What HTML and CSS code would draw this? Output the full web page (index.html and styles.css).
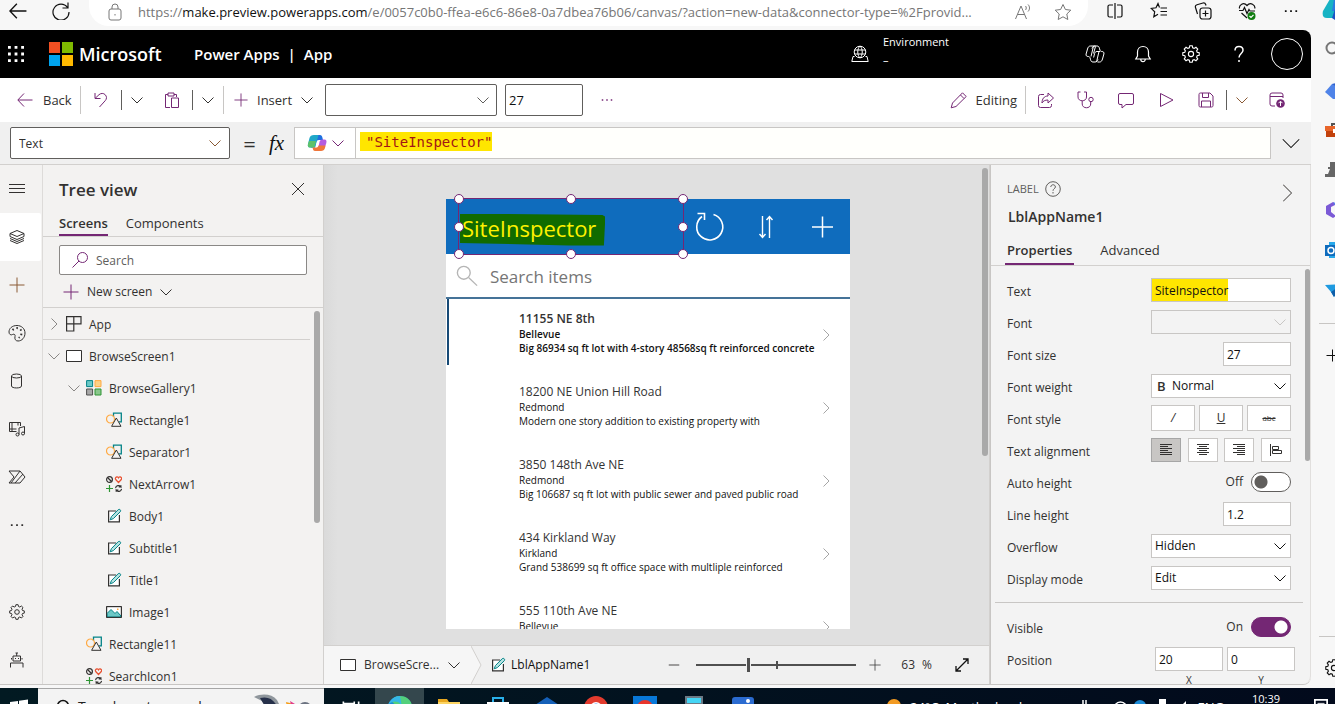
FILE: index.html
```html
<!DOCTYPE html>
<html lang="en">
<head>
<meta charset="utf-8">
<title>Power Apps | App</title>
<link rel="stylesheet" href="styles.css">
</head>
<body>
<svg class="sprite" aria-hidden="true">
  <symbol id="chev-down" viewBox="0 0 12 12"><path d="M.5 3.500 6 9l5.500-5.500"/></symbol>
  <symbol id="chev-right" viewBox="0 0 12 12"><path d="M3.500.5 9 6l-5.500 5.500"/></symbol>
  <symbol id="plus" viewBox="0 0 16 16"><path d="M8 .5v15M.5 8h15"/></symbol>
  <symbol id="minus" viewBox="0 0 16 16"><path d="M2 8h12"/></symbol>
  <symbol id="close" viewBox="0 0 16 16"><path d="m2 2 12 12M14 2 2 14"/></symbol>
  <symbol id="arrow-left" viewBox="0 0 16 16"><path d="M15.500 8H1M7 1.500.8 8 7 14.500"/></symbol>
  <symbol id="dots" viewBox="0 0 16 16"><path class="solid" d="M1 7h2v2H1zM7 7h2v2H7zM13 7h2v2h-2z"/></symbol>
  <symbol id="gear" viewBox="0 0 16 16"><circle cx="8" cy="8" r="2.300"/><path d="m6.900.7-.4 1.800-1.300.5-1.600-1L2 3.600l1 1.600-.5 1.300-1.800.4v2.200l1.800.4.5 1.300-1 1.600L3.600 14l1.600-1 1.300.5.4 1.800h2.200l.4-1.800 1.300-.5 1.600 1 1.600-1.600-1-1.600.5-1.300 1.800-.4V6.900l-1.800-.4-.5-1.300 1-1.600L12.400 2l-1.600 1-1.300-.5L9.100.7z"/></symbol>
  <symbol id="magnifier" viewBox="0 0 16 16"><circle cx="10.500" cy="5.500" r="5"/><path d="m7 9-6.500 6.500"/></symbol>
  <symbol id="screen" viewBox="0 0 16 16"><path class="fill-white" d="M.5 2.500h15v11H.5z"/></symbol>
  <symbol id="app" viewBox="0 0 16 16"><path stroke-width="1.200" d="M.6.6h14.400v7.200H.6zM7.800.6V15H.6V.6"/></symbol>
  <symbol id="gallery" viewBox="0 0 16 16"><path fill="#6bc8c6" stroke="#038387" d="M.6.6h6v6h-6z"/><path fill="#fcd287" stroke="#ffaa44" d="M9 .6h6v6H9z"/><path fill="#a8a8a8" stroke="#505050" d="M.6 9h6v6h-6z"/><path fill="#8ac78c" stroke="#2e9434" d="M9 9h6v6H9z"/></symbol>
  <symbol id="shapes" viewBox="0 0 16 16"><path stroke="#038387" stroke-width="1.300" d="M7.500 5V1.200h7.800v8.600H13"/><circle cx="4.500" cy="7" r="4" stroke="#ffaa44" stroke-width="1.200"/><path fill="#f3f2f1" stroke="#323130" d="m10.300 6 4.700 8.300H5.600z"/></symbol>
  <symbol id="icons" viewBox="0 0 16 16"><g stroke-width="1.200"><circle cx="3.500" cy="3.500" r="2.900" stroke="#323130"/><path stroke="#323130" d="m1.500 1.500 4 4"/><path stroke="#e8502f" d="m12.500 6.500-2.800-3c-.9-1.200.3-3 1.700-2.600.6.100.9.500 1.100.9.200-.4.500-.8 1.100-.9 1.400-.4 2.600 1.400 1.700 2.600z"/><path stroke="#2e9434" d="M3.500 9v7M0 12.500h7"/><path stroke="#323130" d="M9.600 12c.3-2.600 3.700-3.200 5.300-1.200V9.200M15.500 13c-.3 2.600-3.700 3.200-5.300 1.200v1.600M12.700 11h2.300M12.400 14h-2.200"/></g></symbol>
  <symbol id="label" viewBox="0 0 16 16"><path fill="#fff" stroke="#323130" stroke-width="1.200" d="M10 3H2.600v10.800h10.800V7"/><path fill="#b5e2e1" stroke="#038387" d="M12.300 1.600 5.400 8.600l-1.200 3.200 3.200-1.200 7-7c1-1.200-.9-3-2.100-2z"/></symbol>
  <symbol id="image" viewBox="0 0 16 16"><path fill="#fff" d="M.6 2.600h14.800v10.800H.6z"/><path fill="#6bc8c6" stroke="#038387" d="m1 9.500 4-4 4 4 2-2 4 4.500V13H1z"/><path stroke="#323130" d="M.6 2.600h14.800v10.800H.6z"/><path fill="#ffaa44" stroke="none" d="M11 4.500h1.500V6H11z"/></symbol>
  <symbol id="copilot" viewBox="0 0 20 20"><path d="M7 4.500C7.500 3 8.300 2 10 2h2c1.500 0 2 .8 2.400 2.200l.6 2c.3 1 .8 1.300 1.800 1.300 1.500 0 2.500.8 2.100 2.500l-1.400 5c-.5 1.800-1.300 3-3 3h-2M13 15.500c-.5 1.500-1.300 2.500-3 2.500H8c-1.500 0-2-.8-2.400-2.200l-.6-2c-.3-1-.8-1.300-1.800-1.300-1.500 0-2.500-.8-2.100-2.500l1.400-5C3 3.200 3.800 2 5.500 2h5M8.500 2 6 12.500M11.500 18 14 7.500M15 7.500H12c-1.500 0-2 .8-2.400 2l-1 4M10.500 2.500l-2 7"/></symbol>
</svg>

<header class="browser-bar">
  <div class="browser-nav">
    <button class="slot" aria-label="Go back"><svg class="ico i18 strong"><use href="#arrow-left"/></svg></button>
    <button class="slot" aria-label="Reload"><svg class="ico i18 strong" viewBox="0 0 18 18"><path d="M15.500 5.500A8 8 0 1 0 17 10M16 .5v5.500h-5.500"/></svg></button>
  </div>
  <div class="address">
    <svg class="ico i18 gray" viewBox="0 0 18 18"><rect x="3" y="6" width="12" height="11" rx="2"/><path d="M6 6V4a3 3 0 0 1 6 0v2M9 11v1.500"/></svg>
    <p class="url">https://<b>make.preview.powerapps.com</b>/e/0057c0b0-ffea-e6c6-86e8-0a7dbea76b06/canvas/?action=new-data&amp;connector-type=%2Fprovid...</p>
    <svg class="ico i18 gray" viewBox="0 0 18 18"><path d="M1.500 16 7 3l5.500 13M3.500 11.500h7M11.500 3c1 1 1 3 0 4M14 1.500c2 2 2 5 0 7"/></svg>
    <svg class="ico i18 gray" viewBox="0 0 18 18"><path d="m9 1.500 2.400 5 5.400.7-4 3.800 1 5.500L9 13.800l-4.800 2.700 1-5.500-4-3.800 5.400-.7z"/></svg>
  </div>
  <div class="browser-tools">
    <button class="slot" aria-label="Split screen"><svg class="ico i18 strong" viewBox="0 0 18 18"><path d="M7 3H3.500A1.500 1.500 0 0 0 2 4.500v9A1.500 1.500 0 0 0 3.500 15H7M11 3h3.500A1.500 1.500 0 0 1 16 4.500v9a1.500 1.500 0 0 1-1.500 1.500H11M9 1v16"/></svg></button>
    <button class="slot" aria-label="Favorites"><svg class="ico i18 strong" viewBox="0 0 18 18"><path d="M9.500 5.500 8 1.500l-2 4.300-4.800.6 3.500 3.400-.9 5 4.200-2.500M10.500 6H17M10.500 9.500H17M10.500 13H17"/></svg></button>
    <button class="slot" aria-label="Collections"><svg class="ico i18 strong" viewBox="0 0 18 18"><rect x="6" y="6" width="11" height="11" rx="2.500"/><path d="M11.500 8.500v6M8.500 11.500h6M3.500 12 1.500 5.500C1 4 2 3 3 2.700L9 1c1.400-.3 2.300.3 2.700 1.500l.3 1"/></svg></button>
    <button class="slot" aria-label="Browser essentials"><svg class="ico i18 strong" viewBox="0 0 18 18"><path d="M1.500 6.500C.8 3 5.500-.5 9 3.500c3.500-4 8.500-.5 7.800 3M1 8.500h4l1.500-3 2.500 6 2-4 1 1.500h5M3.500 11 9 16"/><circle cx="13.500" cy="14" r="4" fill="#107c10" stroke="none"/><path stroke="#fff" d="m11.500 14 1.500 1.500 2.500-2.700"/></svg></button>
    <button class="slot" aria-label="More"><svg class="ico i14 black"><use href="#dots"/></svg></button>
  </div>
  <svg class="edge-copilot" viewBox="0 0 26 26"><path fill="#17b3c4" d="M8 3h12l-6 19H5c-4 0-5-3-4-7z"/><path fill="#2a7de1" d="M12 3h14v12H10z"/><path fill="#1b54c4" d="m10 22 4-12h12v14H13z"/><path fill="#fff" d="m13 16 3-9h10v9z"/></svg>
</header>

<div class="window">
  <div class="studio">
    <header class="suite">
      <button class="waffle" aria-label="App launcher"><svg class="i16" viewBox="0 0 17 17"><path fill="#fff" d="M0 0h3v3H0zM7 0h3v3H7zM14 0h3v3h-3zM0 7h3v3H0zM7 7h3v3H7zM14 7h3v3h-3zM0 14h3v3H0zM7 14h3v3H7zM14 14h3v3h-3z"/></svg></button>
      <svg class="ms-logo" viewBox="0 0 24 24"><path fill="#f25022" d="M0 0h11v11H0z"/><path fill="#7fba00" d="M13 0h11v11H13z"/><path fill="#00a4ef" d="M0 13h11v11H0z"/><path fill="#ffb900" d="M13 13h11v11H13z"/></svg>
      <span class="ms-name">Microsoft</span>
      <h1 class="suite-title"><span>Power Apps</span><span>|</span><span>App</span></h1>
      <svg class="ico i18 white" viewBox="0 0 18 18"><circle cx="9" cy="7" r="5.800"/><path d="M3.500 5h11M3.500 9h11M9 1c-3 3-3 9 0 12M9 1c3 3 3 9 0 12M3.500 11.500H2L.8 16.500h16.400L16 11.500h-1.500"/></svg>
      <div class="env"><span>Environment</span><span>–</span></div>
      <nav class="suite-tools">
        <button class="slot" aria-label="Copilot"><svg class="ico i20 white"><use href="#copilot"/></svg></button>
        <button class="slot" aria-label="Notifications"><svg class="ico i18 white" viewBox="0 0 18 18"><path stroke-width="1.200" d="M9 1.500c-3.300 0-5.500 2.500-5.500 5.500v4L1.800 14h14.400l-1.700-3V7c0-3-2.200-5.500-5.500-5.500zM6.800 14.500a2.200 2.200 0 0 0 4.400 0"/></svg></button>
        <button class="slot" aria-label="Settings"><svg class="ico i18 white"><use href="#gear"/></svg></button>
        <button class="slot" aria-label="Help"><svg class="ico i18 white" viewBox="0 0 18 18"><path stroke-width="1.500" d="M5 5.500C5 3 6.500 1.500 9 1.500S13 3 13 5.300C13 8.500 9 8.500 9 12.500M9 15v2"/></svg></button>
        <button class="slot" aria-label="Account"><span class="avatar"></span></button>
      </nav>
    </header>

    <div class="toolbar">
      <button class="cmd back"><svg class="ico i16 purple"><use href="#arrow-left"/></svg>Back</button>
      <i class="rule"></i>
      <button class="slot" aria-label="Undo"><svg class="ico i16 purple" viewBox="0 0 16 16"><path d="M2 1v5.500h5.500M2 6.500l4-3.800c2-1.700 4.500-1.700 6.200 0s1.700 4.200 0 6L6.500 15"/></svg></button>
      <i class="rule short"></i>
      <button class="slot narrow" aria-label="Undo options"><svg class="ico i12"><use href="#chev-down"/></svg></button>
      <button class="slot" aria-label="Paste"><svg class="ico i16 purple" viewBox="0 0 16 16"><path d="M6 15.500H1.500v-13H4M10 2.500h2.500V5M4 1h6v3H4zM7.500 6h7v9.500h-7z"/></svg></button>
      <i class="rule short"></i>
      <button class="slot narrow" aria-label="Paste options"><svg class="ico i12"><use href="#chev-down"/></svg></button>
      <i class="rule"></i>
      <button class="cmd insert"><svg class="ico i14 purple"><use href="#plus"/></svg>Insert<svg class="ico i12"><use href="#chev-down"/></svg></button>
      <div class="pick pick-font"><select class="box" aria-label="Font"><option></option></select><svg class="ico i12"><use href="#chev-down"/></svg></div>
      <input class="box size-box" aria-label="Font size" value="27">
      <button class="slot more" aria-label="More commands"><svg class="ico i12 purple"><use href="#dots"/></svg></button>
      <div class="toolbar-end">
        <button class="cmd editing"><svg class="ico i18 purple" viewBox="0 0 18 18"><path d="m12.500 1.800 3.700 3.700L6 15.500l-4.800 1.300L2.500 12zM10.500 4l3.500 3.500"/></svg>Editing</button>
        <i class="rule"></i>
        <button class="slot" aria-label="Share"><svg class="ico i16 purple" viewBox="0 0 16 16"><path d="M6 2.500H2.500a2 2 0 0 0-2 2v9a2 2 0 0 0 2 2h9a2 2 0 0 0 2-2V12M10 1l5.500 5-5.500 5V8C7 8 5 9 4 11c0-4 2-7 6-7z"/></svg></button>
        <button class="slot" aria-label="App checker"><svg class="ico i18 purple" viewBox="0 0 18 18"><path d="M3.500 1H1v5c0 5 8.500 5 8.500 0V1H7M5.200 10v3c0 5 8.500 5 8.500 0v-2.500"/><circle cx="14" cy="8.500" r="2.200"/></svg></button>
        <button class="slot" aria-label="Comments"><svg class="ico i18 purple" viewBox="0 0 18 18"><path d="M3 2.500h12A1.500 1.500 0 0 1 16.500 4v8a1.500 1.500 0 0 1-1.500 1.500H9L5 17v-3.500H3A1.500 1.500 0 0 1 1.500 12V4A1.500 1.500 0 0 1 3 2.500z"/></svg></button>
        <button class="slot" aria-label="Preview"><svg class="ico i16 purple" viewBox="0 0 16 16"><path d="M2.500 1.500 15 8 2.500 14.500z"/></svg></button>
        <button class="slot" aria-label="Save"><svg class="ico i16 purple" viewBox="0 0 16 16"><path d="M1 2.500C1 1.500 1.500 1 2.500 1H12l3 3v9.500c0 1-.5 1.500-1.500 1.500h-11C1.500 15 1 14.500 1 13.500zM4.500 1v4.500h6V1M3.500 15V9h9v6"/></svg></button>
        <i class="rule short"></i>
        <button class="slot narrow" aria-label="Save options"><svg class="ico i12 rust"><use href="#chev-down"/></svg></button>
        <button class="slot" aria-label="Publish"><svg class="ico i16 purple" viewBox="0 0 16 16"><path d="M6 14H3a2 2 0 0 1-2-2V3a2 2 0 0 1 2-2h9a2 2 0 0 1 2 2v3M1 4.500h13"/><circle cx="11.500" cy="11.500" r="4.300" fill="#742774" stroke="none"/><path stroke="#fff" d="M11.500 14V9.500M9.500 11.200l2-2 2 2"/></svg></button>
      </div>
    </div>

    <div class="formula">
      <div class="pick pick-prop"><select class="box" aria-label="Property"><option>Text</option></select><svg class="ico i12 rust"><use href="#chev-down"/></svg></div>
      <span class="equals">=</span><span class="fx">fx</span>
      <div class="fbox">
        <button class="copilot-btn" aria-label="Copilot">
          <svg class="i20" viewBox="0 0 20 20"><path fill="#1f6fe0" d="M7 2h6c1.500 0 2 1 2.400 2.500L16 7h-4c-2 0-2.500 1-3 3l-1 4.500H4z"/><path fill="#20a8c8" d="M7 2h4.500L8 14.500H3C1 14.500.5 13 1 11l1.500-6C3 3 4.500 2 7 2z"/><path fill="#5dc26a" d="M2 8h7l-1.500 6.500H3C1 14.500.5 13 1 11z"/><path fill="#b45be0" d="M16 6.500h1.500c1.800 0 2.300 1.500 1.800 3.500L18 14h-6.500l1-5c.3-1.500 1-2.500 3.500-2.500z"/><path fill="#f0763a" d="M11.500 12.500h7L18 15c-.5 2-2 3-4 3H8c-1.500 0-2-1-2.500-3.500h3.500c1.500 0 2-.5 2.500-2z"/></svg>
          <svg class="ico i12 purple"><use href="#chev-down"/></svg>
        </button>
        <code class="formula-text"><mark>"SiteInspector"</mark></code>
      </div>
      <button class="slot expand" aria-label="Expand formula bar"><svg class="ico i18 black thin"><use href="#chev-down"/></svg></button>
    </div>

    <div class="work">
      <nav class="rail">
        <button aria-label="Menu"><svg class="ico i16" viewBox="0 0 16 16"><path d="M0 3.500h16M0 7.500h16M0 11.500h16"/></svg></button>
        <button class="on" aria-label="Tree view"><svg class="ico i16" viewBox="0 0 16 16"><path d="m8 1.500 7 3-7 3-7-3zM1 7.500l7 3 7-3M1 9.500l7 3 7-3M1 11.500l7 3 7-3M1 4.500v3M15 4.500v3"/></svg></button>
        <button aria-label="Insert"><svg class="ico i16 rust"><use href="#plus"/></svg></button>
        <button aria-label="Theme"><svg class="ico i18" viewBox="0 0 18 18"><path d="M9 1.500C4 1.500 1 4.500 1 8c0 2.500 2 3.500 3.500 2.500 2-1 3 .5 2.500 2-.6 2.500.5 4.500 3 4.500 4 0 7-3.500 7-8 0-4.300-3.500-7.500-8-7.500z"/><path stroke-width="2" stroke-dasharray="1.500 2.800" d="M4.500 6C8 2.500 14 4 13.500 9S11.500 13 11 14"/></svg></button>
        <button aria-label="Data"><svg class="ico i16" viewBox="0 0 16 16"><ellipse cx="7.500" cy="3" rx="5" ry="2"/><path d="M2.500 3v10c0 2.600 10 2.600 10 0V3"/></svg></button>
        <button aria-label="Media"><svg class="ico i18" viewBox="0 0 18 18"><path d="M8.500 11.500H1.500v-9h11V6M1.500 9h7M4 2.500v9M10 2.500v3"/><circle cx="9.500" cy="14.500" r="1.500"/><circle cx="15" cy="13.500" r="1.500"/><path d="M11 14.500V8l5.500-1.500v7"/></svg></button>
        <button aria-label="Power Automate"><svg class="ico i18" viewBox="0 0 18 18"><path d="M1 3h11l5 6-5 6H1l5-6zM3 15 12 3M7 15l8-9"/></svg></button>
        <button aria-label="More"><svg class="ico i14"><use href="#dots"/></svg></button>
        <span class="grow"></span>
        <button aria-label="Settings"><svg class="ico i16"><use href="#gear"/></svg></button>
        <button aria-label="Virtual agent"><svg class="ico i16" viewBox="0 0 16 16"><path d="M4 4h7.500v5H4zM7.700 4V1M6.500 1h2.500M1.500 15.500V11h12.500v4.500M2.500 6v1.500M13 6v1.500M6 6.500h1M9 6.500h1"/></svg></button>
      </nav>

      <aside class="tree">
        <div class="tree-head"><h2>Tree view</h2><button class="plain" aria-label="Close"><svg class="ico i16"><use href="#close"/></svg></button></div>
        <div class="tabs"><button class="tab on">Screens</button><button class="tab">Components</button></div>
        <div class="tree-tools">
          <label class="search"><svg class="ico i16 purple"><use href="#magnifier"/></svg><input placeholder="Search" aria-label="Search"></label>
          <button class="new-screen"><svg class="ico i16 purple"><use href="#plus"/></svg>New screen<svg class="ico i12"><use href="#chev-down"/></svg></button>
        </div>
        <div class="tree-body">
          <ul class="nodes">
            <li class="node l0 app-node"><svg class="ico i12 twist"><use href="#chev-right"/></svg><svg class="ico i16"><use href="#app"/></svg><span>App</span></li>
            <li class="node l0"><svg class="ico i12 twist"><use href="#chev-down"/></svg><svg class="ico i16"><use href="#screen"/></svg><span>BrowseScreen1</span></li>
            <li class="node l1"><svg class="ico i12 twist"><use href="#chev-down"/></svg><svg class="ico i16"><use href="#gallery"/></svg><span>BrowseGallery1</span></li>
            <li class="node l3"><svg class="ico i16"><use href="#shapes"/></svg><span>Rectangle1</span></li>
            <li class="node l3"><svg class="ico i16"><use href="#shapes"/></svg><span>Separator1</span></li>
            <li class="node l3"><svg class="ico i16"><use href="#icons"/></svg><span>NextArrow1</span></li>
            <li class="node l3"><svg class="ico i16"><use href="#label"/></svg><span>Body1</span></li>
            <li class="node l3"><svg class="ico i16"><use href="#label"/></svg><span>Subtitle1</span></li>
            <li class="node l3"><svg class="ico i16"><use href="#label"/></svg><span>Title1</span></li>
            <li class="node l3"><svg class="ico i16"><use href="#image"/></svg><span>Image1</span></li>
            <li class="node l2"><svg class="ico i16"><use href="#shapes"/></svg><span>Rectangle11</span></li>
            <li class="node l2"><svg class="ico i16"><use href="#icons"/></svg><span>SearchIcon1</span></li>
          </ul>
          <i class="thumb tree-thumb"></i>
        </div>
      </aside>

      <main class="stage">
        <div class="canvas">
          <section class="phone">
            <div class="phone-head">
              <span class="app-name"><mark>SiteInspector</mark></span>
              <svg class="ico head-ico" viewBox="0 0 32 32"><path stroke-width="1.600" d="M19.500 3.500A13 13 0 1 1 8 5.500M3.500 2.500h7V9"/></svg>
              <svg class="ico head-ico" viewBox="0 0 32 32"><path stroke-width="1.400" d="M12.500 5v21M9.500 23l3 3.500 3-3.500M19.500 27V6M16.500 9l3-3.500 3 3.500"/></svg>
              <svg class="ico head-ico" viewBox="0 0 32 32"><path stroke-width="1.500" d="M16.500 5.500v21M6 16h21"/></svg>
              <div class="selection"><i class="h a"></i><i class="h b"></i><i class="h c"></i><i class="h d"></i><i class="h e"></i><i class="h f"></i><i class="h g"></i><i class="h k"></i></div>
            </div>
            <label class="phone-search"><svg class="ico" viewBox="0 0 24 24"><circle cx="8.500" cy="8.500" r="7"/><path d="m14 14 9 8.500"/></svg><input placeholder="Search items" aria-label="Search items"></label>
            <ul class="sites">
              <li class="site first"><div><h3>11155 NE 8th</h3><p>Bellevue</p><p>Big 86934 sq ft lot with 4-story 48568sq ft reinforced concrete</p></div><svg class="ico i12"><use href="#chev-right"/></svg></li>
              <li class="site"><div><h3>18200 NE Union Hill Road</h3><p>Redmond</p><p>Modern one story addition to existing property with</p></div><svg class="ico i12"><use href="#chev-right"/></svg></li>
              <li class="site"><div><h3>3850 148th Ave NE</h3><p>Redmond</p><p>Big 106687 sq ft lot with public sewer and paved public road</p></div><svg class="ico i12"><use href="#chev-right"/></svg></li>
              <li class="site"><div><h3>434 Kirkland Way</h3><p>Kirkland</p><p>Grand 538699 sq ft office space with multliple reinforced</p></div><svg class="ico i12"><use href="#chev-right"/></svg></li>
              <li class="site"><div><h3>555 110th Ave NE</h3><p>Bellevue</p></div><svg class="ico i12"><use href="#chev-right"/></svg></li>
            </ul>
          </section>
          <i class="thumb stage-thumb"></i>
        </div>
        <footer class="status">
          <button class="crumb"><svg class="ico i16"><use href="#screen"/></svg>BrowseScre...<svg class="ico i12"><use href="#chev-down"/></svg></button>
          <svg class="crumb-arrow" viewBox="0 0 11 38" preserveAspectRatio="none"><path d="M0 0 10 19 0 38z" fill="#f6f6f6"/><path d="M0 0 10 19 0 38" fill="none" stroke="#d2d0ce"/></svg>
          <button class="crumb current"><svg class="ico i16"><use href="#label"/></svg>LblAppName1</button>
          <div class="zoom">
            <button class="plain" aria-label="Zoom out"><svg class="ico i14"><use href="#minus"/></svg></button>
            <input class="slider" type="range" min="0" max="100" value="32" aria-label="Zoom">
            <button class="plain" aria-label="Zoom in"><svg class="ico i12"><use href="#plus"/></svg></button>
            <span class="pct">63</span><span>%</span>
            <button class="plain fit" aria-label="Fit to window"><svg class="ico i14 black" viewBox="0 0 14 14"><path stroke-width="1.300" d="M1 13 13 1M8 1h5v5M1 8v5h5"/></svg></button>
          </div>
        </footer>
      </main>

      <aside class="props">
        <div class="props-head">
          <div>
            <p class="kind">LABEL <svg class="ico i16" viewBox="0 0 16 16"><circle cx="8" cy="8" r="7.300"/><path d="M5.800 6c0-3 4.600-3 4.600 0C10.400 7.500 8 7.800 8 9.800M8 11v1.500"/></svg></p>
            <h2>LblAppName1</h2>
          </div>
          <button class="plain" aria-label="Collapse"><svg class="ico i18 thin"><use href="#chev-right"/></svg></button>
        </div>
        <div class="tabs props-tabs"><button class="tab on">Properties</button><button class="tab">Advanced</button></div>
        <div class="props-body">
          <div class="rows">
            <div class="row"><label for="p-text">Text</label><div class="field lit"><input id="p-text" class="ctl" value="SiteInspector"></div></div>
            <div class="row"><label for="p-font">Font</label><div class="field pick off"><select id="p-font" class="ctl" disabled><option></option></select><svg class="ico i12"><use href="#chev-down"/></svg></div></div>
            <div class="row"><label for="p-size">Font size</label><div class="field half"><input id="p-size" class="ctl" value="27"></div></div>
            <div class="row"><label for="p-weight">Font weight</label><div class="field pick weight"><select id="p-weight" class="ctl"><option>Normal</option></select><b>B</b><svg class="ico i12 black"><use href="#chev-down"/></svg></div></div>
            <div class="row"><span>Font style</span><div class="field trio"><button class="opt" aria-label="Italic"><em>/</em></button><button class="opt" aria-label="Underline"><u>U</u></button><button class="opt" aria-label="Strikethrough"><s>abc</s></button></div></div>
            <div class="row"><span>Text alignment</span><div class="field quad">
              <button class="opt on" aria-label="Left"><svg class="ico i14" viewBox="0 0 14 14"><path d="M1 1.500h12M1 3.500h8M1 5.500h12M1 7.500h8M1 9.500h12M1 11.500h12"/></svg></button>
              <button class="opt" aria-label="Center"><svg class="ico i14" viewBox="0 0 14 14"><path d="M1 1.500h12M3 3.500h8M1 5.500h12M3 7.500h8M1 9.500h12M3 11.500h8"/></svg></button>
              <button class="opt" aria-label="Right"><svg class="ico i14" viewBox="0 0 14 14"><path d="M1 1.500h12M5 3.500h8M1 5.500h12M5 7.500h8M1 9.500h12M5 11.500h8"/></svg></button>
              <button class="opt" aria-label="Justify"><svg class="ico i14" viewBox="0 0 14 14"><path d="M1.500 1v12M3.500 3.500h6v3h-6zM3.500 7.500h9v3h-9z"/></svg></button></div></div>
            <div class="row"><label for="p-auto">Auto height</label><div class="field switch"><span>Off</span><input id="p-auto" type="checkbox" class="toggle"></div></div>
            <div class="row"><label for="p-line">Line height</label><div class="field half"><input id="p-line" class="ctl" value="1.2"></div></div>
            <div class="row"><label for="p-over">Overflow</label><div class="field pick"><select id="p-over" class="ctl"><option>Hidden</option></select><svg class="ico i12 black"><use href="#chev-down"/></svg></div></div>
            <div class="row"><label for="p-mode">Display mode</label><div class="field pick"><select id="p-mode" class="ctl"><option>Edit</option></select><svg class="ico i12 black"><use href="#chev-down"/></svg></div></div>
            <hr>
            <div class="row"><label for="p-vis">Visible</label><div class="field switch"><span>On</span><input id="p-vis" type="checkbox" class="toggle" checked></div></div>
            <div class="row pos"><span>Position</span><div class="pair"><label><input class="ctl" value="20">X</label><label><input class="ctl" value="0">Y</label></div></div>
          </div>
          <i class="thumb props-thumb"></i>
        </div>
      </aside>
    </div>
  </div>

  <aside class="edge-bar">
    <svg class="ico dim" viewBox="0 0 18 18"><circle cx="7" cy="7" r="5.500" stroke-width="2"/><path stroke-width="2" d="m11 11 6 6"/></svg>
    <svg class="art" viewBox="0 0 18 18"><path fill="#4f83e8" d="m0 11 7-8 11-2v17H8z"/><path fill="#2f5fc9" d="m7 3 11-2v8z"/></svg>
    <svg class="art" viewBox="0 0 18 18"><path fill="#555" d="M6 2h8v4h-2V4H8v2H6z"/><path fill="#e8652a" d="M0 5h18v5H0z"/><path fill="#c2410c" d="M1 10h17v6H1z"/><path fill="#fff" d="M8 8h3v4H8z"/></svg>
    <svg class="art" viewBox="0 0 18 18"><path fill="#666" d="M5 1h5v5h2v2h-2l1 5h2v3H0v-3h3l2-5H3V6h2z"/></svg>
    <svg class="art" viewBox="0 0 18 18"><path fill="#7b5ad6" d="M8 1 1 5v8l7 4 3-2-5-4V6l6-3z"/><path fill="#4f8df0" d="m8 1 8 4v8l-5 2V6z"/></svg>
    <svg class="art" viewBox="0 0 18 18"><path fill="#28a8ea" d="M4 1h14v16H4z"/><path fill="#0f6cbd" d="M0 4h12v11H0z"/><circle cx="6" cy="9.500" r="3" fill="none" stroke="#fff" stroke-width="1.500"/></svg>
    <svg class="art" viewBox="0 0 18 18"><path fill="#1f9ae0" d="m0 4 18-1-9 13-3-5z"/><path fill="#0f5ea8" d="m6 11 12-8-9 13z"/></svg>
    <i class="edge-rule"></i>
    <svg class="ico black" viewBox="0 0 18 18"><path d="M7.500 3.500v12M1.500 9.500h12"/></svg>
    <span class="grow"></span>
    <i class="edge-rule"></i>
    <svg class="ico black"><use href="#gear"/></svg>
  </aside>
</div>

<footer class="taskbar">
  <button class="start" aria-label="Start"><svg viewBox="0 0 18 18"><path fill="#fff" d="m0 3 8-1v7H0zM9 1.800 18 .5V9H9zM0 10h8v7l-8-1zM9 10h9v8l-9-1.200z"/></svg></button>
  <div class="task-search"><svg class="ico black" viewBox="0 0 18 18"><circle cx="10" cy="7" r="5.500" stroke-width="1.500"/><path d="m6 11-5 5"/></svg><span>Type here to search</span><svg class="bird" viewBox="0 0 60 24"><path fill="#8f969c" d="M2 3c8-4 18-3 23 3l4 8H15L10 7z"/><path fill="#26304a" d="M8 4c8-2 14 1 18 10H14z"/><path fill="#f59e1b" d="m34 8 8 2-6 8z"/><path fill="#e23b8a" d="m38 7 5 3-3 4z"/><circle cx="53" cy="15" r="7" fill="#6b7280"/></svg></div>
  <div class="task-apps">
    <span><svg viewBox="0 0 22 22"><path fill="none" stroke="#fff" stroke-width="1.500" d="M4 5v2h10V5M18 5v10M4 10h10v8H4z"/></svg></span>
    <span class="on"><svg viewBox="0 0 24 24"><circle cx="12" cy="12" r="12" fill="#1b8ad6"/><path fill="#53d07c" d="M12 0c7 0 12 5 12 11H10L3 5c2-3 5-5 9-5z"/><path fill="#35b7e8" d="M12 0C6 0 2 4 0 9c4-5 12-5 14 2z"/></svg></span>
    <span><svg viewBox="0 0 24 24"><path fill="#e9a820" d="M1 3h9l2 3H1z"/><path fill="#fcd462" d="M1 6h22v15H1z"/></svg></span>
    <span><svg viewBox="0 0 24 24"><path fill="none" stroke="#29b0ea" stroke-width="2" d="M7 6V2h10v4"/><path fill="#fff" d="M1 6h22v16H1z"/></svg></span>
    <span><svg viewBox="0 0 24 24"><path fill="#1560b8" d="m12 1 12 8v13H0V9z"/></svg></span>
    <span><svg viewBox="0 0 24 24"><circle cx="12" cy="12" r="12" fill="#e33b2e"/><circle cx="12" cy="12" r="6" fill="#fff"/><circle cx="12" cy="12" r="4.500" fill="#4285f4"/></svg></span>
    <span><svg viewBox="0 0 24 24"><path fill="#0878d8" d="M0 0h24v24H0z"/><circle cx="12" cy="12" r="8" fill="#e8352b"/></svg></span>
    <span><svg viewBox="0 0 24 24"><path fill="#6c7a86" d="M3 0h18v24H3z"/><path fill="#45d5f5" d="M5 2h14v5H5z"/></svg></span>
    <span><svg viewBox="0 0 24 24"><rect x="1" y="1" width="22" height="22" rx="3" fill="#2b6bd0"/><circle cx="17" cy="5" r="2" fill="#fff"/></svg></span>
  </div>
  <div class="tray"><i class="sun"></i><span>24°C&nbsp; Mostly cloudy</span>
    <svg class="tray-icons" viewBox="0 0 110 16"><path fill="none" stroke="#fff" stroke-width="1.500" d="M2 1v6M5 1v6M34 6c3-4 8-4 11 0"/><circle cx="59" cy="7" r="6" fill="#1b8ad6"/><path fill="#fff" d="M78 0h7v12h-7zM100 7l5-5v12z"/></svg>
    <span class="lang">ENG</span><time>10:39</time><svg class="note" viewBox="0 0 16 16"><path fill="none" stroke="#fff" stroke-width="2" d="M1 1h14v14H1z"/><path stroke="#fff" d="M4 5h8"/></svg></div>
</footer>
</body>
</html>
```
FILE: styles.css
```css
* { box-sizing: border-box; }
body { margin: 0; height: 100vh; display: grid; grid-template-rows: 30px minmax(0, 1fr) 16px; background: #f7f7f7; color: #323130; font: 12px/16px "Open Sans", "Noto Sans", sans-serif; overflow: hidden; }
button, input, select { font: inherit; color: inherit; margin: 0; }
button { border: 0; padding: 0; background: none; }
select { appearance: none; }
h1, h2, h3, p, ul { margin: 0; padding: 0; list-style: none; }
mark { color: inherit; background: #ffe600; }
.sprite { position: absolute; width: 0; height: 0; }
.ico { fill: none; stroke: currentColor; stroke-width: 1; flex: none; }
.strong { color: #111; stroke-width: 1.2; }
.thin { stroke-width: .7; }
.solid { fill: currentColor; stroke: none; }
.fill-white { fill: #fff; }
.i12 { width: 12px; height: 12px; }
.i14 { width: 14px; height: 14px; }
.i16 { width: 16px; height: 16px; }
.i18 { width: 18px; height: 18px; }
.i20 { width: 20px; height: 20px; }
.purple { color: #742774; }
.white { color: #fff; }
.black { color: #111; }
.gray { color: #767676; }
.rust { color: #8a5a35; }
.slot, .plain { display: grid; place-items: center; flex: none; }
.grow { flex: 1; }
.thumb { background: #a9a9a9; border-radius: 3px; }

.browser-bar { display: flex; color: #222; overflow: hidden; }
.browser-nav { display: flex; width: 89px; padding: 0 0 8px; }
.browser-nav .slot { width: 35px; }
.browser-nav .slot + .slot { margin-left: 8px; }
.address { flex: 1; min-width: 0; height: 26px; display: flex; align-items: center; gap: 22px; padding: 0 16px 2px 17px; background: #fff; border-radius: 0 0 20px 20px; }
.url { flex: 1; min-width: 0; margin-left: -8px; font-size: 13px; line-height: 18px; color: #767676; white-space: nowrap; }
.url b { font-weight: 400; color: #111; }
.browser-tools { display: flex; padding: 0 0 8px 5px; }
.browser-tools .slot { width: 44px; }
.edge-copilot { width: 26px; height: 26px; margin: -4px -13px 0 9px; flex: none; }

.window { display: grid; grid-template-columns: minmax(0, 1fr) 24px; min-height: 0; }
.studio { display: grid; grid-template-rows: 48px 44px 43px minmax(0, 1fr); min-height: 0; margin-bottom: 3px; border-bottom: 1px solid #c8c6c4; border-radius: 0 8px 8px 0; overflow: hidden; }

.suite { display: flex; align-items: center; background: #000; color: #fff; }
.waffle { width: 32px; display: grid; place-items: center; }
.ms-logo { width: 24px; height: 24px; margin: 0 6px 0 17px; }
.ms-name { font-size: 18px; font-weight: 600; width: 115px; }
.suite-title { flex: 1; display: flex; gap: 8px; font-size: 15px; font-weight: 600; }
.env { display: grid; align-self: flex-start; padding-top: 3px; margin-left: 14px; width: 188px; font-size: 11px; line-height: 18px; }
.suite-tools { display: flex; }
.suite-tools .slot { width: 48px; height: 48px; }
.avatar { width: 32px; height: 32px; border: 1px solid #fff; border-radius: 50%; }

.toolbar { display: flex; align-items: center; background: #fff; font-size: 13px; }
.cmd { display: flex; align-items: center; }
.back { gap: 10px; width: 80px; padding-left: 17px; }
.rule { width: 1px; height: 28px; background: #c8c6c4; }
.rule.short { height: 20px; background: #605e5c; }
.toolbar .slot { width: 40px; height: 40px; }
.toolbar .narrow { width: 30px; }
.insert { gap: 9px; padding: 0 12px 0 10px; }
.insert, .back, .editing { line-height: 18px; }
.pick { display: grid; align-items: center; }
.pick > * { grid-area: 1 / 1; }
.pick > svg { justify-self: end; margin-right: 8px; pointer-events: none; }
.box { width: 100%; height: 32px; border: 1px solid #605e5c; border-radius: 2px; background: #fff; padding: 0 4px; }
.pick-font { width: 172px; color: #605e5c; }
.size-box { width: 78px; margin-left: 8px; padding-left: 3px; color: #111; }
.toolbar .more { width: 48px; }
.toolbar-end { display: flex; align-items: center; margin-left: auto; padding-right: 14px; }
.editing { gap: 8px; padding-right: 8px; }

.formula { display: flex; align-items: center; padding: 0 0 1px 10px; background: #f0f0f0; border-bottom: 1px solid #d2d0ce; }
.pick-prop { width: 220px; }
.pick-prop .box { padding: 2px 8px 0; }
.pick-prop > svg { margin-right: 9px; }
.equals { width: 39px; text-align: center; font-size: 22px; }
.fx { width: 25px; font: italic 21px/24px "Liberation Serif", serif; color: #111; }
.fbox { flex: 1; display: flex; height: 32px; background: #fffffc; border: 1px solid #c8c6c4; }
.copilot-btn { display: flex; align-items: center; justify-content: center; gap: 5px; width: 61px; border-right: 1px solid #c8c6c4; background: #fff; }
.formula-text { font: 14px/18px "DejaVu Sans Mono", monospace; color: #a31515; padding: 5px 4px; }
.formula-text mark { padding: 2px 0 1px 6px; }
.expand { width: 40px; }

.work { display: grid; grid-template-columns: 43px 281px minmax(0, 1fr) 321px; min-height: 0; }
.rail { display: flex; flex-direction: column; background: #f3f2f1; border-right: 1px solid #dddbd9; }
.rail button { height: 48px; display: grid; place-items: center; padding-right: 7px; margin-right: 1px; border-radius: 0 2px 2px 0; }
.rail .on { background: #fff; }

.tree { display: flex; flex-direction: column; min-height: 0; background: #f3f2f1; border-right: 1px solid #d2d0ce; }
.tree-head { display: flex; justify-content: space-between; align-items: center; height: 48px; padding: 0 17px 0 16px; }
.tree-head h2 { font-size: 17px; font-weight: 600; line-height: 24px; padding-top: 2px; }
.tabs { display: flex; gap: 18px; height: 24px; padding-left: 16px; border-bottom: 1px solid #d2d0ce; font-size: 14px; }
.tab { padding-bottom: 1px; border-bottom: 2px solid transparent; white-space: nowrap; }
.tab.on { font-weight: 600; border-color: #742774; }
.tree .tab { font-size: 13px; }
.tree-tools { padding: 8px 16px 0; border-bottom: 1px solid #d2d0ce; height: 71px; }
.search { display: flex; align-items: center; gap: 8px; height: 30px; padding-left: 12px; background: #fff; border: 1px solid #8a8886; border-radius: 2px; }
.search input { flex: 1; min-width: 0; border: 0; padding: 2px 0 0; background: none; outline: 0; }
.search input::placeholder { color: #605e5c; }
.new-screen { display: flex; align-items: center; gap: 8px; height: 34px; padding-left: 4px; }
.tree-body { flex: 1; min-height: 0; display: flex; justify-content: space-between; overflow: hidden; }
.nodes { flex: 1; }
.node { display: flex; align-items: center; gap: 7px; height: 32px; }
.node span { padding-top: 2px; }
.app-node { border-bottom: 1px solid #d2d0ce; }
.twist { margin-right: -1px; color: #8a8886; }
.l0 { padding-left: 5px; }
.l1 { padding-left: 25px; }
.l2 { padding-left: 43px; }
.l3 { padding-left: 63px; }
.tree-thumb { width: 6px; height: 212px; margin: 3px 3px 0 4px; }

.stage { display: grid; grid-template-rows: minmax(0, 1fr) 39px; min-height: 0; }
.canvas { display: flex; min-height: 0; padding: 34px 1px 16px 122px; background: linear-gradient(90deg, #dadada, #e0e0e0 14px); border-right: 1px solid #d2d0ce; }
.phone { flex: 0 1 404px; margin-right: auto; background: #fff; display: flex; flex-direction: column; min-height: 0; color: #111; }
.phone-head { position: relative; flex: none; display: flex; align-items: center; height: 55px; background: #0f6cbd; color: #fff; }
.app-name { flex: 1; padding: 6px 0 0 14px; font-size: 22px; line-height: 28px; color: #fff200; }
.app-name mark { display: inline-block; height: 32px; padding: 0 9px 0 2px; background: #116b00; clip-path: polygon(0 0, 98% 5%, 100% 10%, 99% 100%, 75% 100%, 0 92%); }
.head-ico { width: 32px; height: 32px; margin: 0 12px; }
.selection { position: absolute; left: 12px; top: -1px; width: 226px; height: 57px; border: 1px solid #742774; }
.h { position: absolute; width: 10px; height: 10px; margin: -5px; background: #fff; border: 1px solid #742774; border-radius: 50%; }
.a, .b, .c { top: 0; }
.d, .e { top: 50%; }
.f, .g, .k { top: 100%; }
.a, .d, .f { left: 0; }
.b, .g { left: 50%; }
.c, .e, .k { left: 100%; }
.phone-search { flex: none; display: flex; align-items: center; gap: 12px; height: 45px; padding-left: 10px; border-bottom: 2px solid #457398; }
.phone-search svg { width: 22px; height: 24px; color: #b5b5b5; stroke-width: 1.5; }
.phone-search input { flex: 1; min-width: 0; border: 0; padding: 3px 0 0; background: none; font-size: 17px; line-height: 24px; }
.phone-search input::placeholder { color: #757575; }
.sites { flex: 1; min-height: 0; overflow: hidden; }
.site { display: flex; justify-content: space-between; align-items: center; height: 73px; padding: 2px 18px 0 73px; }
.site > div { align-self: flex-start; padding-top: 9px; white-space: nowrap; }
.site > svg { color: #a6a6a6; margin-bottom: 4px; }
.site h3 { font-size: 12px; font-weight: 400; line-height: 17px; color: #333; }
.site p { font-size: 10px; line-height: 14px; color: #111; }
.first h3, .first p { font-weight: 600; }
.first { background: linear-gradient(#174a76, #174a76) 1px 0 / 2px 66px no-repeat; }
.stage-thumb { width: 6px; height: 288px; margin-top: -31px; flex: none; }

.status { display: flex; align-items: stretch; background: #f0f0f0; border-top: 1px solid #d2d0ce; border-right: 1px solid #d2d0ce; }
.crumb { display: flex; align-items: center; gap: 8px; padding: 0 11px 0 16px; background: #f6f6f6; white-space: nowrap; }
.crumb .i12 { margin-left: 1px; }
.crumb-arrow { width: 11px; height: 100%; flex: none; }
.crumb.current { gap: 5px; padding: 0 8px; background: none; color: #111; }
.zoom { display: flex; align-items: center; margin-left: auto; padding-right: 20px; }
.slider { appearance: none; width: 160px; height: 16px; margin: 0 13px 0 15px; background: linear-gradient(#505050, #505050) 80px 50% / 2px 8px no-repeat, linear-gradient(#505050, #505050) 0 50% / 100% 2px no-repeat; }
.slider::-webkit-slider-thumb { appearance: none; width: 5px; height: 14px; background: #505050; border: solid #f0f0f0; border-width: 0 1px; }
.pct { margin: 0 7px 0 20px; }
.fit { margin-left: 23px; }

.props { display: flex; flex-direction: column; min-height: 0; background: #f3f3f3; border-left: 1px solid #c8c6c4; border-right: 1px solid #e1dfdd; border-radius: 0 0 8px 0; }
.props-head { display: flex; justify-content: space-between; align-items: center; height: 75px; padding: 0 14px 0 16px; }
.props-head .plain { margin-bottom: 20px; color: #605e5c; }
.kind { display: flex; align-items: center; gap: 6px; font-size: 11px; color: #605e5c; padding-top: 8px; }
.props-head h2 { font-size: 14px; font-weight: 600; line-height: 24px; padding: 8px 0 4px 1px; }
.props-tabs { height: 26px; gap: 24px; padding-left: 14px; font-size: 13px; }
.props-tabs .tab { padding: 0 2px 3px; }
.props-body { flex: 1; min-height: 0; display: flex; overflow: hidden; }
.rows { flex: 1; padding: 9px 0 0 16px; }
.row { display: flex; align-items: center; justify-content: space-between; height: 32px; padding-right: 19px; }
.row > :first-child { padding-top: 2px; }
.field { width: 140px; margin-bottom: 2px; }
.ctl { display: block; width: 100%; height: 24px; padding: 0 3px; border: 1px solid #c8c6c4; border-radius: 0; background: #fff; color: #111; opacity: 1; }
.off .ctl { background: #f3f3f3; }
.off svg { color: #c8c6c4; }
.row .pick > svg { margin-right: 5px; }
.lit .ctl { background: linear-gradient(#ffe600, #ffe600) 0 0 / 76px 100% no-repeat #fff; }
.half { width: 68px; }
.weight .ctl { padding-left: 20px; }
.weight b { padding-left: 6px; font-size: 13px; font-weight: 600; }
.trio, .quad { display: flex; justify-content: space-between; }
.opt { display: grid; place-items: center; width: 44px; height: 26px; border: 1px solid #c8c6c4; background: #fff; }
.quad .opt { width: 30px; height: 24px; }
.opt.on { background: #c8c6c4; border-color: #a6a6a6; }
.opt s { font-size: 8px; }
.switch { display: flex; align-items: center; justify-content: flex-end; gap: 8px; }
.toggle { appearance: none; width: 40px; height: 20px; margin: 0; border: 1px solid #605e5c; border-radius: 10px; background: radial-gradient(circle at 9px 9px, #605e5c 6px, transparent 7px) #fff; }
.toggle:checked { border-color: #742774; background: radial-gradient(circle at 29px 9px, #fff 6px, transparent 7px) #742774; }
hr { width: 308px; margin: 7px 0 9px -12px; border: 0; border-top: 1px solid #c8c6c4; }
.pos { padding-right: 15px; height: 36px; align-items: flex-start; }
.pos > span { margin-top: 7px; }
.pair { display: flex; gap: 4px; padding-top: 3px; }
.pair label { width: 68px; text-align: center; font-size: 10px; line-height: 18px; }
.pair .ctl { font-size: 12px; }
.props-thumb { width: 5px; height: 192px; margin: 3px 0 0 -5px; }

.edge-bar { display: flex; flex-direction: column; padding-left: 14px; overflow: hidden; }
.edge-bar > svg { width: 18px; height: 18px; margin: 11px 0; flex: none; }
.edge-bar .dim { color: #767676; }
.edge-rule { width: 24px; height: 1px; margin: 13px 0 13px -6px; background: #c8c6c4; flex: none; }
.edge-rule + .ico { margin-top: 9px; }

.taskbar { display: flex; background: linear-gradient(90deg, #021a22, #020a1c); color: #fff; overflow: hidden; }
.start { width: 38px; display: flex; justify-content: center; padding-top: 11px; }
.start svg { width: 18px; height: 18px; flex: none; }
.task-search { display: flex; width: 286px; padding: 10px 0 0 15px; background: #f3f3f3; border-top: 1px solid #a6a6a6; color: #222; font-size: 14px; gap: 7px; }
.task-search svg { width: 18px; height: 18px; flex: none; }
.task-search span { flex: 1; white-space: nowrap; }
.task-search .bird { width: 60px; height: 24px; margin: -5px 12px 0 0; }
.task-apps { display: flex; padding-left: 2px; }
.task-apps span { width: 49px; display: flex; justify-content: center; padding-top: 8px; }
.task-apps svg { width: 24px; height: 24px; flex: none; }
.task-apps .on { background: #34474d; }
.tray { flex: 1; display: flex; align-items: flex-start; padding: 11px 7px 0 120px; font-size: 13px; white-space: nowrap; }
.sun { width: 14px; height: 14px; border-radius: 50%; background: #f29a22; margin-right: 9px; }
.tray-icons { width: 110px; height: 16px; margin: 0 6px 0 auto; }
time { margin: -8px 34px 0 28px; font-size: 11px; }
.note { width: 14px; height: 14px; }
```
